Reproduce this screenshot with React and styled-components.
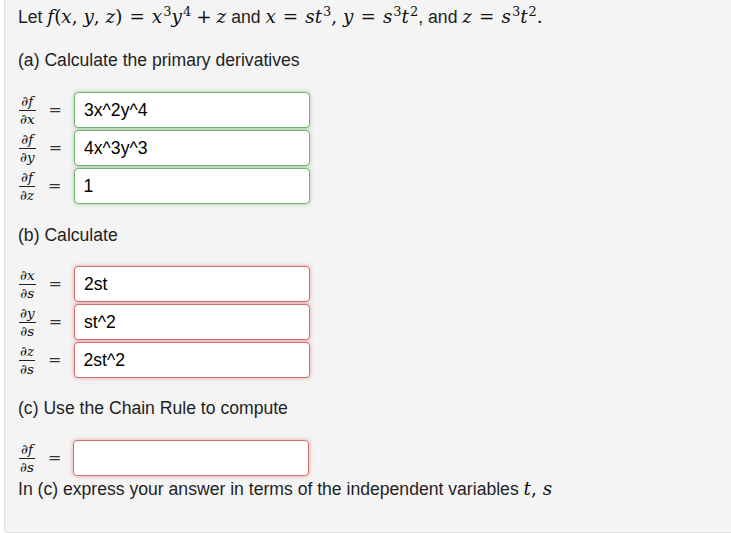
import React from "react";
import styled, { createGlobalStyle } from "styled-components";

const GlobalStyle = createGlobalStyle`
  html, body {
    margin: 0;
    padding: 0;
    background: #ffffff;
    overflow: hidden;
  }
  body {
    font-family: "Liberation Sans", Arial, sans-serif;
  }
`;

const Panel = styled.div`
  margin-left: 4px;
  width: 760px;
  background: #f4f4f4;
  border: 1px solid #e0e0e0;
  border-top: none;
  border-radius: 0 0 0 4px;
  padding: 0 0 33px 13px;
  box-sizing: border-box;
  display: flex;
  flex-direction: column;
  color: #1f1f1f;
  font-size: 17.6px;
`;

const Line = styled.div`
  line-height: 20px;
  height: 20px;
  white-space: nowrap;
  margin-top: ${(p) => p.$top}px;
`;

const Math = styled.span`
  font-family: "DejaVu Serif", "Liberation Serif", serif;
  font-size: 18.4px;
  color: #111;
`;

const V = styled.i`
  font-style: italic;
`;

const Sup = styled.sup`
  font-size: 13px;
  line-height: 0;
  vertical-align: 7px;
  margin-left: 1px;
`;

const Op = styled.span`
  margin: 0 ${(p) => p.$gap || 7}px;
`;

const Rows = styled.div`
  display: flex;
  flex-direction: column;
  gap: 2px;
  margin-top: ${(p) => p.$top}px;
`;

const Row = styled.div`
  display: flex;
  align-items: center;
  height: 36px;
`;

const Frac = styled.span`
  display: inline-flex;
  flex-direction: column;
  align-items: center;
  font-family: "DejaVu Serif", "Liberation Serif", serif;
  font-style: italic;
  font-size: 13.5px;
  line-height: 13px;
  color: #111;
  padding: 0 1px;
`;

const Num = styled.span`
  padding: 0 1px 2px;
`;

const Den = styled.span`
  padding: 2px 1px 0;
  border-top: 1px solid #222;
  align-self: stretch;
  text-align: center;
`;

const Equals = styled.span`
  font-family: "DejaVu Serif", "Liberation Serif", serif;
  font-size: 16px;
  color: #333;
  margin: 0 12px 0 12px;
  line-height: 1;
`;

const Answer = styled.div`
  width: 236px;
  height: 36px;
  box-sizing: border-box;
  border-radius: 4px;
  background: #ffffff;
  border: 1px solid ${(p) => (p.$ok ? "#74b374" : "#d46f6f")};
  box-shadow: 0 0 4px
    ${(p) => (p.$ok ? "rgba(60, 150, 60, 0.45)" : "rgba(210, 60, 60, 0.45)")};
  padding-left: 9px;
  display: flex;
  align-items: center;
  font-size: 17.6px;
  color: #000;
`;

const Fraction = ({ top, bottom }) => (
  <Frac>
    <Num>∂{top}</Num>
    <Den>∂{bottom}</Den>
  </Frac>
);

const AnswerRow = ({ top, bottom, value, ok }) => (
  <Row>
    <Fraction top={top} bottom={bottom} />
    <Equals>=</Equals>
    <Answer $ok={ok}>{value}</Answer>
  </Row>
);

export default function App() {
  return (
    <>
      <GlobalStyle />
      <Panel>
        <Line $top={7}>
          Let{" "}
          <Math>
            <V>f</V>(<V>x</V>, <V>y</V>, <V>z</V>)<Op>=</Op>
            <V>x</V>
            <Sup>3</Sup>
            <V>y</V>
            <Sup>4</Sup>
            <Op $gap={5}>+</Op>
            <V>z</V>
          </Math>{" "}
          and{" "}
          <Math>
            <V>x</V>
            <Op>=</Op>
            <V>st</V>
            <Sup>3</Sup>, <V>y</V>
            <Op>=</Op>
            <V>s</V>
            <Sup>3</Sup>
            <V>t</V>
            <Sup>2</Sup>
          </Math>
          , and{" "}
          <Math>
            <V>z</V>
            <Op>=</Op>
            <V>s</V>
            <Sup>3</Sup>
            <V>t</V>
            <Sup>2</Sup>.
          </Math>
        </Line>

        <Line $top={23}>(a) Calculate the primary derivatives</Line>
        <Rows $top={22}>
          <AnswerRow top="f" bottom="x" value="3x^2y^4" ok />
          <AnswerRow top="f" bottom="y" value="4x^3y^3" ok />
          <AnswerRow top="f" bottom="z" value="1" ok />
        </Rows>

        <Line $top={21}>(b) Calculate</Line>
        <Rows $top={21}>
          <AnswerRow top="x" bottom="s" value="2st" />
          <AnswerRow top="y" bottom="s" value="st^2" />
          <AnswerRow top="z" bottom="s" value="2st^2" />
        </Rows>

        <Line $top={20}>(c) Use the Chain Rule to compute</Line>
        <Rows $top={22}>
          <AnswerRow top="f" bottom="s" value="" />
        </Rows>

        <Line $top={3}>
          In (c) express your answer in terms of the independent variables{" "}
          <Math>
            <V>t</V>, <V>s</V>
          </Math>
        </Line>
      </Panel>
    </>
  );
}
